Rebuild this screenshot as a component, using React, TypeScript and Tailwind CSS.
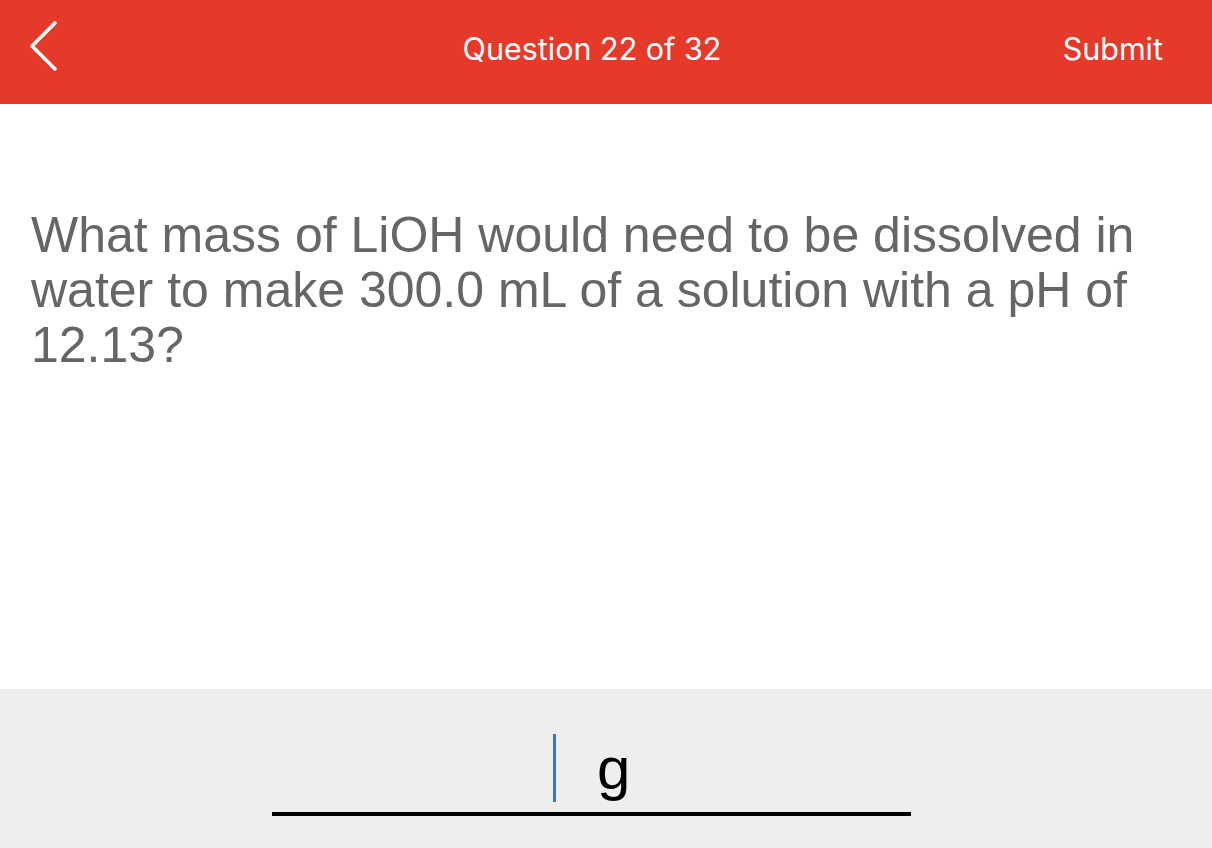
import React from "react";

export default function App() {
  return (
    <div
      className="w-[1212px] h-[848px] flex flex-col bg-white overflow-hidden"
      style={{ fontFamily: '"Liberation Sans", Arial, sans-serif' }}
    >
      <header
        className="h-[104px] shrink-0 bg-[#e53a29] flex items-start pt-[34px] text-white"
        style={{ fontFamily: 'Inter, "Liberation Sans", Arial, sans-serif' }}
      >
        <div className="w-[120px] shrink-0 pl-[28px] -mt-[14px]">
          <svg width="32" height="52" viewBox="0 0 32 52" fill="none">
            <path
              d="M27 3 L4 26 L27 49"
              stroke="white"
              strokeWidth="3.6"
              strokeLinecap="round"
              strokeLinejoin="round"
            />
          </svg>
        </div>
        <div className="flex-1 flex justify-center pl-[52px]">
          <span className="text-[30.5px] leading-none">Question 22 of 32</span>
        </div>
        <div className="w-[200px] shrink-0 flex justify-end pr-[49px]">
          <span className="text-[30.5px] leading-none">Submit</span>
        </div>
      </header>

      <main className="flex-1 px-[31px] pt-[206px] -mt-[102px]">
        <p className="text-[50px] leading-[55px] text-[#666666] max-w-[1140px]">
          What mass of LiOH would need to be dissolved in water to make 300.0 mL of a solution with a pH of 12.13?
        </p>
      </main>

      <section className="h-[159px] shrink-0 bg-[#eeeeee] flex flex-col pt-[45px]">
        <div className="ml-[272px] w-[639px] flex flex-col">
          <div className="flex items-start h-[78px]">
            <div className="ml-[281px] w-[3px] h-[68px] bg-[#3d7ab3]" />
            <span className="ml-[41px] text-[60px] leading-[60px] text-black mt-[5px]">g</span>
          </div>
          <div className="h-[4px] bg-black" />
        </div>
      </section>
    </div>
  );
}
